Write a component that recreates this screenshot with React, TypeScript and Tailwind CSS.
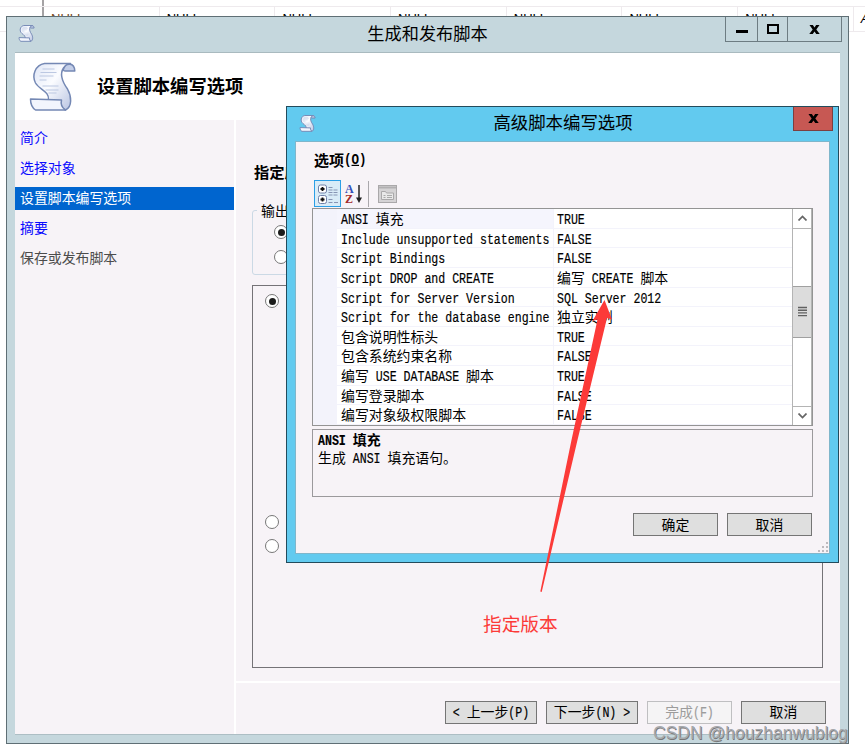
import { Fragment, type ReactNode } from 'react'
import { clsx } from 'clsx'

const steps = [
  { label: '简介', state: 'link' },
  { label: '选择对象', state: 'link' },
  { label: '设置脚本编写选项', state: 'current' },
  { label: '摘要', state: 'link' },
  { label: '保存或发布脚本', state: 'disabled' },
]

const options = [
  { name: 'ANSI 填充', value: 'TRUE' },
  { name: 'Include unsupported statements', value: 'FALSE' },
  { name: 'Script Bindings', value: 'FALSE' },
  { name: 'Script DROP and CREATE', value: '编写 CREATE 脚本' },
  { name: 'Script for Server Version', value: 'SQL Server 2012' },
  { name: 'Script for the database engine', value: '独立实例' },
  { name: '包含说明性标头', value: 'TRUE' },
  { name: '包含系统约束名称', value: 'FALSE' },
  { name: '编写 USE DATABASE 脚本', value: 'TRUE' },
  { name: '编写登录脚本', value: 'FALSE' },
  { name: '编写对象级权限脚本', value: 'FALSE' },
]

// Latin runs are half the width of a CJK glyph, but just as tall
function Mixed({ text }: { text: string }) {
  const runs = text.match(/[\x20-\x7e]+|[^\x20-\x7e]+/g) ?? []
  return (
    <span className="whitespace-pre">
      {runs.map((run, i) =>
        run.charCodeAt(0) < 128 ? (
          <span
            key={i}
            className="inline-block origin-[50%_70%] scale-y-[1.2] font-['Liberation_Mono',monospace] text-[0.834em] [-webkit-text-stroke:0.15px_currentColor]"
          >
            {run}
          </span>
        ) : (
          <Fragment key={i}>{run}</Fragment>
        ),
      )}
    </span>
  )
}

function ScrollIcon({ className, stroke = 1.3 }: { className?: string; stroke?: number }) {
  return (
    <svg viewBox="0 0 46 50" className={className}>
      <defs>
        <linearGradient id="paper" x1="0" y1="0" x2="1" y2="1">
          <stop offset="0" stopColor="#dfe6f6" />
          <stop offset="0.45" stopColor="#fbfcff" />
          <stop offset="1" stopColor="#b9c4e2" />
        </linearGradient>
      </defs>
      <g stroke="#7488b4" strokeWidth={stroke} strokeLinejoin="round">
        <path
          d="M15 1.500 C6 3 2 13 6 21 C10 28 20 29 19 38 L36 48 C43 45 42 34 38 27 C33 20 30 12 34 6 L41 1.500 Z"
          fill="url(#paper)"
        />
        <path d="M34 7 C36 0.500 45 0 45.300 9 L36 9 C34 9 33.500 8 34 7 Z" fill="#c3cee8" />
        <path d="M1 37 L32 38 C31 42 33 46 36 48 L6 48 C3 46 1 42 1 37 Z" fill="#f2f5fd" />
      </g>
      <g stroke="#bcc8e2" strokeWidth="1.2">
        <path d="M13 7h12M11 10.500h16M10 14h14M10 18h7M13 24h16M16 28h13M19 31h8" />
      </g>
    </svg>
  )
}

function Radio({ checked }: { checked?: boolean }) {
  return (
    <span className="flex size-3.5 shrink-0 items-center justify-center rounded-full border-[1.5px] border-[#777] bg-white">
      {checked && <span className="size-[7px] rounded-full bg-[#1c1c1c]" />}
    </span>
  )
}

function PushButton({
  className,
  disabled,
  children,
}: {
  className?: string
  disabled?: boolean
  children: ReactNode
}) {
  return (
    <button
      className={clsx(
        'flex h-[23px] shrink-0 items-center justify-center border text-[13.9px] leading-none',
        disabled
          ? 'border-[#bfbfc1] bg-[#f5f4f5] text-[#9c9c9c]'
          : 'border-[#757575] bg-[#dfdfdf] text-black',
        className,
      )}
    >
      {children}
    </button>
  )
}

function CloseGlyph() {
  return (
    <svg viewBox="0 0 12 10" preserveAspectRatio="none" className="h-[9px] w-[11px]">
      <path d="M0.500 0h3.700L6 2.900 7.800 0h3.700L8 5l3.700 5H7.900L6 7.100 4.100 10H0.300l3.700-5z" fill="#000" />
    </svg>
  )
}

function ResultGrid() {
  return (
    <div className="h-8 overflow-hidden">
      <div className="flex h-[7px] border-b border-[#eeeaed]">
        <div className="w-[44px] border-r-2 border-[#a5a3a5]" />
      </div>
      <div className="flex h-[25px]">
        <div className="w-[44px] shrink-0 border-r-2 border-b border-r-[#a5a3a5] border-b-[#eeeaed]" />
        {Array.from({ length: 8 }, (_, i) => (
          <div
            key={i}
            className={clsx(
              "w-[115.7px] shrink-0 border-r border-b border-[#eeeaed] pt-[3px] pl-[7px] font-['Liberation_Sans',sans-serif] text-[13px] leading-[18px]",
              i === 0 ? 'text-[#7a4a20]' : 'text-black',
              i === 7 && 'italic',
            )}
          >
            {i === 7 ? 'A' : 'NULL'}
          </div>
        ))}
      </div>
    </div>
  )
}

function WizardWindow() {
  return (
    <div className="absolute top-4 left-1.5 flex h-[728px] w-[843px] flex-col border border-[#5f6f75] bg-[#c5d7dd] px-2 pb-2">
      <div className="flex h-[34.500px] shrink-0 items-start">
        <ScrollIcon className="mt-2 ml-[3px] size-[17px]" stroke={2.8} />
        <h1 className="mt-[3px] ml-[95px] flex-1 text-center text-[17.200px] leading-[25px]">生成和发布脚本</h1>
        <div className="-mr-0.5 flex h-[25px] border border-t-0 border-[#6d7c82]">
          <div className="flex w-[32px] items-center justify-center border-r border-[#6d7c82] pt-[5px]">
            <span className="h-[3px] w-3 bg-black" />
          </div>
          <div className="flex w-[30px] items-center justify-center border-r border-[#6d7c82]">
            <span className="h-[10px] w-3 border-2 border-black" />
          </div>
          <div className="flex w-[53px] items-center justify-center">
            <CloseGlyph />
          </div>
        </div>
      </div>

      {/* Page header */}
      <div className="flex h-[68.500px] shrink-0 items-start border-t border-[#a9babf] bg-white">
        <ScrollIcon className="mt-[9px] ml-3.5 h-[50px] w-[47px]" stroke={1.5} />
        <h2 className="mt-[20px] ml-[21px] text-[18.300px] leading-6 font-bold">设置脚本编写选项</h2>
      </div>

      <div className="flex min-h-0 flex-1 border-b border-[#adbec4] bg-[#f7f3f7]">
        <nav className="flex w-[221px] shrink-0 flex-col gap-[6.500px] border-r-2 border-white pt-[6.500px] text-[13.900px]">
          {steps.map((s) => (
            <a
              key={s.label}
              className={clsx(
                'flex h-[23.500px] items-center pl-[5px] leading-none',
                s.state === 'link' && 'text-[#0a0aff]',
                s.state === 'current' && 'bg-[#0065cf] text-white',
                s.state === 'disabled' && 'text-[#4c4c4c]',
              )}
            >
              {s.label}
            </a>
          ))}
        </nav>

        <main className="flex min-w-0 flex-1 flex-col">
          <div className="flex h-[563px] shrink-0 flex-col border-b-2 border-white pt-[42px] pr-[17px] pl-4">
            <p className="pl-[2px] text-[15.300px] leading-[18px] font-bold whitespace-nowrap">指定应</p>
            <fieldset className="mt-[21px] h-[74px] shrink-0 rounded-[3px] border border-[#cbd9e5] pl-[21px] text-[13.900px]">
              <legend className="-ml-[17px] px-1 leading-[18px]">输出类型</legend>
              <div className="flex flex-col gap-[11px] pt-[6px]">
                <Radio checked />
                <Radio />
              </div>
            </fieldset>
            <div className="mt-[10px] flex h-[383px] shrink-0 flex-col border border-[#757377] pt-[8px] pl-[12px]">
              <Radio checked />
              <div className="mt-[207px] flex flex-col gap-[10px]">
                <Radio />
                <Radio />
              </div>
            </div>
          </div>
          <div className="flex justify-end gap-[9px] pt-[17.500px] pr-3.5">
            <PushButton className="w-[92px]">
              <Mixed text="< 上一步(P)" />
            </PushButton>
            <PushButton className="w-[92px]">
              <Mixed text="下一步(N) >" />
            </PushButton>
            <PushButton className="w-[85px]" disabled>
              <Mixed text="完成(F)" />
            </PushButton>
            <PushButton className="w-[85px]">取消</PushButton>
          </div>
        </main>
      </div>
    </div>
  )
}

function Toolbar() {
  return (
    <div className="flex h-[27px] items-center">
      <div className="flex size-[27px] items-center justify-center border border-[#2b9fe6] bg-[#d9ecf8]">
        <svg viewBox="0 0 20 20" className="size-5">
          <g fill="#fff" stroke="#6f80a8">
            <rect x="0.500" y="1" width="8" height="8" rx="2" />
            <rect x="0.500" y="11.500" width="8" height="8" rx="2" />
          </g>
          <path d="M4.500 3v4M2.500 5h4M4.500 13.500v4M2.500 15.500h4" stroke="#111" strokeWidth="1.800" />
          <path
            d="M10.500 3.500h4M10.500 6h4M15.500 6h4M10.500 8.500h4M15.500 8.500h4M10.500 11h4M15.500 11h4M10.500 15.500h4M10.500 18.500h4M16 18.500h4"
            stroke="#8795b4"
            strokeWidth="1.200"
          />
        </svg>
      </div>
      <div className="ml-[4px] flex items-center">
        <div className="flex flex-col font-['Liberation_Serif',serif] text-[12px] leading-[10px] font-bold">
          <span className="text-[#3450b8]">A</span>
          <span className="text-[#a32a2a]">Z</span>
        </div>
        <svg viewBox="0 0 6 18" className="ml-[2px] h-[18px] w-1.5">
          <path d="M3 0v14" stroke="#222" strokeWidth="1.500" />
          <path d="M0 12.500h6L3 18z" fill="#222" />
        </svg>
      </div>
      <div className="ml-[6px] h-[26px] w-px bg-[#aaa8ac]" />
      <svg viewBox="0 0 19 18" className="ml-[9px] h-[18px] w-[19px]">
        <rect x="0.500" y="0.500" width="18" height="17" fill="#d5d3d5" stroke="#aaa8aa" />
        <path d="M1 2.500h17" stroke="#b2b0b2" strokeWidth="2" />
        <path d="M3.500 6.500h4l1 1.500h7v6.500h-12z" fill="#e9e8e9" stroke="#aaa8aa" />
        <path d="M5.500 10.500h2M9 10.500h5M5.500 12.500h2M9 12.500h5" stroke="#aaa" />
      </svg>
    </div>
  )
}

function ScrollBar() {
  return (
    <div className="flex w-[20px] shrink-0 flex-col border-r border-l border-[#b4b4b4] bg-white">
      <div className="flex h-[19.500px] items-center justify-center border-b border-[#b4b4b4]">
        <svg viewBox="0 0 9 6" className="h-1.5 w-[9px]">
          <path d="M0.500 5.500L4.500 1.500l4 4" fill="none" stroke="#666" strokeWidth="1.700" />
        </svg>
      </div>
      <div className="flex flex-1 flex-col pt-[57px]">
        <div className="flex h-[52px] items-center justify-center border-y border-[#a0a0a0] bg-[#dcdcdc]">
          <svg viewBox="0 0 9 11" className="h-[11px] w-[9px]">
            <path d="M0 1.500h9M0 4.200h9M0 6.900h9M0 9.600h9" stroke="#606060" strokeWidth="1.400" />
          </svg>
        </div>
      </div>
      <div className="flex h-[19.500px] items-center justify-center border-t border-[#b4b4b4]">
        <svg viewBox="0 0 9 6" className="h-1.5 w-[9px]">
          <path d="M0.500 0.500l4 4 4-4" fill="none" stroke="#666" strokeWidth="1.700" />
        </svg>
      </div>
    </div>
  )
}

function OptionsDialog() {
  return (
    <div className="absolute top-[106px] left-[286px] flex h-[457px] w-[553px] flex-col border border-[#234b5c] bg-[#62caef] px-2 pb-2">
      <div className="flex h-[34px] shrink-0 items-start">
        <ScrollIcon className="mt-2 ml-[4px] size-[17px]" stroke={2.8} />
        <h2 className="mt-[2px] ml-[17px] flex-1 text-center text-[17.400px] leading-[25px]">高级脚本编写选项</h2>
        <div className="-mr-[3px] flex h-[24px] w-[40px] items-center justify-center border border-t-0 border-[#7c3f40] bg-[#c75853]">
          <CloseGlyph />
        </div>
      </div>

      <div className="relative flex flex-1 flex-col border border-[#7fb6cb] bg-[#f7f3f7] px-4">
        <div className="mt-[8px] flex items-center pl-[2px] text-[15px] leading-5 font-bold">
          选项
          <span className="scale-y-[1.2] font-['Liberation_Mono',monospace] text-[12.500px]">
            (<u>O</u>)
          </span>
        </div>
        <div className="mt-[10px] pl-[2px]">
          <Toolbar />
        </div>

        {/* Property grid */}
        <div className="mt-[1px] flex h-[218px] shrink-0 border border-[#949494] bg-white">
          <div className="w-[24px] shrink-0 bg-[#f3f3fb]" />
          <div className="min-w-0 flex-1">
            {options.map((o, i) => (
              <div key={o.name} className="flex h-[19.650px] border-b border-[#f3f3fb] text-[13.900px] leading-[18px]">
                <div
                  className={clsx(
                    'w-[217px] shrink-0 border-r border-[#f3f3fb] pl-[4px]',
                    i === 0 && 'bg-[#f5f5fd]',
                  )}
                >
                  <Mixed text={o.name} />
                </div>
                <div className="pl-[3px]">
                  <Mixed text={o.value} />
                </div>
              </div>
            ))}
          </div>
          <ScrollBar />
        </div>

        <div className="mt-[3px] h-[68px] shrink-0 border border-[#9b999c] pl-[5px] text-[13.900px] leading-[18px]">
          <div className="h-[18px] font-bold">
            <Mixed text="ANSI 填充" />
          </div>
          <div className="h-[18px]">
            <Mixed text="生成 ANSI 填充语句。" />
          </div>
        </div>

        <div className="mt-4 flex justify-end gap-[9px] pr-px">
          <PushButton className="w-[85px]">确定</PushButton>
          <PushButton className="w-[85px]">取消</PushButton>
        </div>

        <svg viewBox="0 0 10 10" className="absolute right-px bottom-px size-2.5">
          <path d="M8 0h2v2h-2zM8 4h2v2h-2zM4 4h2v2h-2zM8 8h2v2h-2zM4 8h2v2h-2zM0 8h2v2h-2z" fill="#bdbabe" />
        </svg>
      </div>
    </div>
  )
}

export default function App() {
  return (
    <div className="relative h-[752px] w-[865px] overflow-hidden bg-white font-['Noto_Sans_CJK_SC',sans-serif] text-black">
      <ResultGrid />
      <WizardWindow />
      <OptionsDialog />

      {/* Annotation */}
      <svg viewBox="0 0 865 752" className="pointer-events-none absolute inset-0 h-full w-full">
        <path
          d="M604.500 300L592.500 321L597.500 319.500L571.500 440L540.300 591.500L541.700 592L577.500 440L607 318L612 319.500Z"
          fill="#fc3a38"
        />
      </svg>
      <div className="absolute top-[610px] left-[483px] text-[18.700px] leading-[26px] text-[#fc3a38]">指定版本</div>
      <div className="absolute top-[721px] left-[653px] font-['Liberation_Sans',sans-serif] text-[17.500px] leading-6 whitespace-nowrap text-[#a6a9ad] [text-shadow:0.7px_0.7px_0_#777]">
        CSDN @houzhanwublog
      </div>
    </div>
  )
}
